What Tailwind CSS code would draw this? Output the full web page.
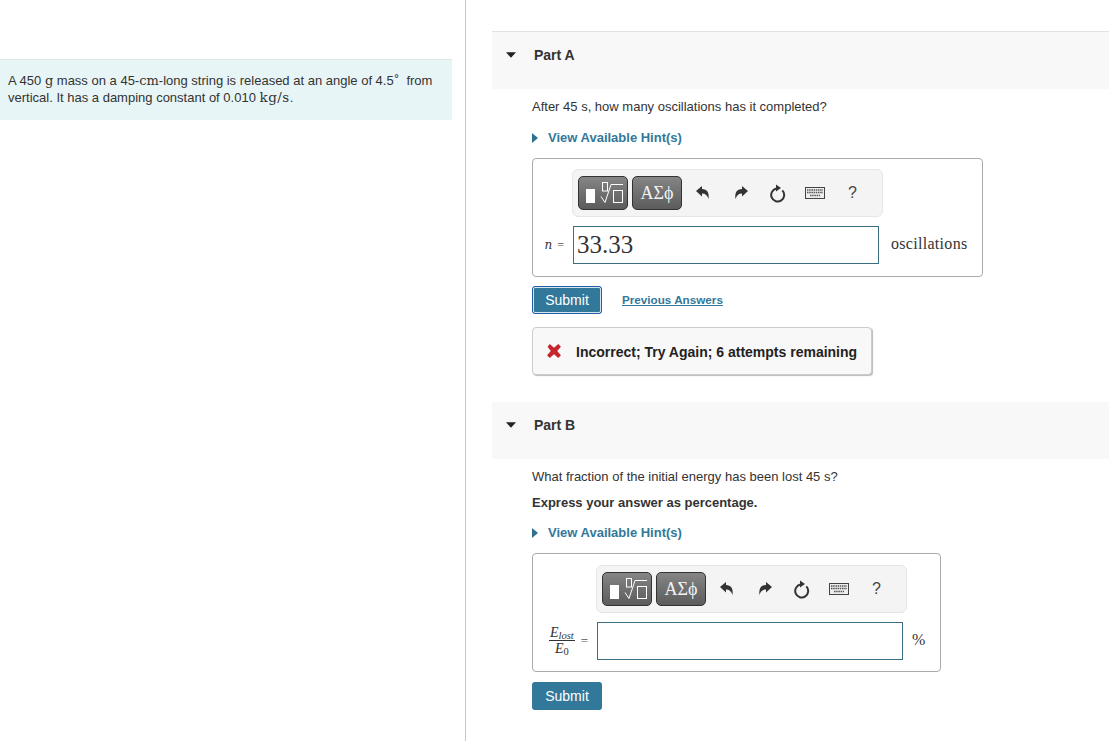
<!DOCTYPE html>
<html lang="en">
<head>
    <meta charset="UTF-8">
    <meta name="viewport" content="width=device-width, initial-scale=1.0">
    <title>Part A and Part B</title>
    <script src="https://cdn.jsdelivr.net/npm/@tailwindcss/browser@4"></script>
</head>
<body class="bg-white h-[741px] overflow-hidden font-['Liberation_Sans',Arial,sans-serif] text-[13px] text-[#333]">
<div class="flex h-[741px]">
    <!-- problem statement -->
    <div class="w-[466px] shrink-0 border-r border-[#c8c8c8] pt-[59px]">
        <div class="w-[452px] h-[61px] bg-[#e8f5f6] border-t border-[#dfe6e6] pl-2 pt-[12px] leading-[17px]">
            <div class="h-[17px] leading-[17px]">A 450 <span class="font-['DejaVu_Serif',serif] text-[13px] leading-none">g</span> mass on a 45-<span class="font-['DejaVu_Serif',serif] text-[13px] leading-none">cm</span>-long string is released at an angle of 4.5<span class="font-['DejaVu_Serif',serif] text-[11px] leading-none align-[2px]">°</span>&nbsp; from</div>
            <div class="h-[17px] leading-[17px]">vertical. It has a damping constant of 0.010 <span class="font-['DejaVu_Serif',serif] text-[13.500px] leading-none tracking-[0.5px]">kg/s</span>.</div>
        </div>
    </div>

    <!-- parts -->
    <div class="flex-1 pl-[26px] pt-[31px]">
        <div class="h-[58px] bg-[#f8f8f8] border-t border-[#e2e2e2] flex items-start pt-[15px] pl-[14px]">
            <svg class="w-[10px] h-[6px] mt-[5px]" viewBox="0 0 11 6"><path d="M0 0H11L5.500 6Z" fill="#222"/></svg>
            <span class="ml-[18px] text-[14px] leading-[16px] font-bold text-[#333]">Part A</span>
        </div>
        <div class="pl-[40px]">
            <p class="mt-[9px] leading-[17px]">After 45 s, how many oscillations has it completed?</p>
            <div class="mt-[14px] h-[17px] flex items-center font-bold text-[#32789a]">
                <svg class="w-[6px] h-[10px]" viewBox="0 0 6 10"><path d="M0 0L6 5L0 10Z" fill="#31708f"/></svg>
                <span class="ml-[10px]">View Available Hint(s)</span>
            </div>
            <!-- answer box A -->
            <div class="mt-[12px] w-[451px] h-[119px] border border-[#aaa] rounded-[4px]">
                <div class="ml-[39px] mt-[10px] w-[311px] h-[48px] bg-[#f4f4f4] border border-[#e6e6e6] rounded-[6px] flex items-center pl-[5px]">
                    <div class="w-[50px] h-[34px] rounded-[5px] border border-[#333] bg-gradient-to-b from-[#858585] to-[#5c5c5c] flex items-end pl-[7px] pb-[6px] gap-[5px]">
                        <div class="w-[9px] h-[14px] bg-white"></div>
                        <svg class="w-[24px] h-[21px]" viewBox="0 0 24 21" fill="none" stroke="#fff" stroke-width="1"><rect x="2.500" y="0.500" width="5" height="8.500"/><path d="M1 14.500L5 20.500L11 2.500H23"/><rect x="13.500" y="8.500" width="9" height="12"/></svg>
                    </div>
                    <div class="ml-[4px] w-[50px] h-[34px] rounded-[5px] border border-[#333] bg-gradient-to-b from-[#858585] to-[#5c5c5c] flex items-center justify-center text-[#f2f2f2] font-['Liberation_Serif',serif] text-[18px]">ΑΣϕ</div>
                    <svg class="ml-[13px] w-[16px] h-[16px]" viewBox="0 0 16 16"><path d="M1 6L7 1V4C12 4 14.500 7.500 13.500 14C12.500 10.500 10.500 8.500 7 8.500V11.500Z" fill="#333"/></svg>
                    <svg class="ml-[22px] w-[16px] h-[16px]" viewBox="0 0 16 16"><path d="M15 6L9 1V4C4 4 1.500 7.500 2.500 14C3.500 10.500 5.500 8.500 9 8.500V11.500Z" fill="#333"/></svg>
                    <svg class="ml-[20px] w-[18px] h-[19px]" viewBox="0 0 18 19" fill="none"><path d="M13.300 6.400A6.500 6.500 0 1 1 7.500 4.600" stroke="#333" stroke-width="2"/><path d="M7 0.500L12 4L7 7.500Z" fill="#333"/></svg>
                    <svg class="ml-[18px] w-[20px] h-[12px]" viewBox="0 0 20 12"><rect x="0.500" y="0.500" width="19" height="11" fill="#eee" stroke="#444"/><path d="M2 3H18M2 5.500H18M5 8.500H15" stroke="#555" stroke-width="1.500" stroke-dasharray="1.500 0.700"/></svg>
                    <span class="ml-[23px] text-[16px] text-[#444]">?</span>
                </div>
                <div class="flex items-center mt-[9px] h-[38px]">
                    <span class="w-[40px] text-right pr-[9px] font-['Liberation_Serif',serif] text-[12px] text-[#555]"><i class="font-['DejaVu_Serif',serif] text-[#333]">n</i><span class="ml-[5px]">=</span></span>
                    <div class="w-[306px] h-[38px] border border-[#3b6e80] flex items-center pl-[3px] font-['Liberation_Serif',serif] text-[25px] text-[#333]">33.33</div>
                    <span class="ml-[12px] mb-[2px] font-['Liberation_Serif',serif] text-[16px] tracking-[0.3px]">oscillations</span>
                </div>
            </div>
            <div class="mt-[9px] flex items-center h-[28px]">
                <button class="w-[70px] h-[28px] rounded-[3px] bg-[#32789a] text-white text-[14px] border border-[#1f5fa8] outline outline-1 -outline-offset-2 outline-white/80">Submit</button>
                <a class="ml-[20px] text-[11.700px] font-bold text-[#32789a] underline">Previous Answers</a>
            </div>
            <div class="mt-[13px] w-[340px] h-[48px] bg-[#f8f8f8] border border-[#ccc] rounded-[4px] shadow-[1px_1px_1px_#bbb] flex items-center pl-[13px]">
                <svg class="w-[16px] h-[16px]" viewBox="0 0 15 15"><path d="M1.500 3.500L3.500 1L7.500 4.500L11.500 1L14 3.500L10.500 7.500L14 11.500L11.500 14L7.500 10.500L3.500 14L1 11.500L4.500 7.500Z" fill="#c5262c"/></svg>
                <span class="ml-[14px] pt-[2px] text-[14px] font-bold text-[#222]">Incorrect; Try Again; 6 attempts remaining</span>
            </div>
        </div>

        <div class="mt-[27px] h-[57px] bg-[#f8f8f8] flex items-start pt-[15px] pl-[14px]">
            <svg class="w-[10px] h-[6px] mt-[5px]" viewBox="0 0 11 6"><path d="M0 0H11L5.500 6Z" fill="#222"/></svg>
            <span class="ml-[18px] text-[14px] leading-[16px] font-bold text-[#333]">Part B</span>
        </div>
        <div class="pl-[40px]">
            <p class="mt-[9px] leading-[17px]">What fraction of the initial energy has been lost 45 s?</p>
            <p class="mt-[9px] leading-[17px] font-bold">Express your answer as percentage.</p>
            <div class="mt-[13px] h-[17px] flex items-center font-bold text-[#32789a]">
                <svg class="w-[6px] h-[10px]" viewBox="0 0 6 10"><path d="M0 0L6 5L0 10Z" fill="#31708f"/></svg>
                <span class="ml-[10px]">View Available Hint(s)</span>
            </div>
            <!-- answer box B -->
            <div class="mt-[12px] w-[409px] h-[119px] border border-[#aaa] rounded-[4px]">
                <div class="ml-[63px] mt-[11px] w-[311px] h-[48px] bg-[#f4f4f4] border border-[#e6e6e6] rounded-[6px] flex items-center pl-[5px]">
                    <div class="w-[50px] h-[34px] rounded-[5px] border border-[#333] bg-gradient-to-b from-[#858585] to-[#5c5c5c] flex items-end pl-[7px] pb-[6px] gap-[5px]">
                        <div class="w-[9px] h-[14px] bg-white"></div>
                        <svg class="w-[24px] h-[21px]" viewBox="0 0 24 21" fill="none" stroke="#fff" stroke-width="1"><rect x="2.500" y="0.500" width="5" height="8.500"/><path d="M1 14.500L5 20.500L11 2.500H23"/><rect x="13.500" y="8.500" width="9" height="12"/></svg>
                    </div>
                    <div class="ml-[4px] w-[50px] h-[34px] rounded-[5px] border border-[#333] bg-gradient-to-b from-[#858585] to-[#5c5c5c] flex items-center justify-center text-[#f2f2f2] font-['Liberation_Serif',serif] text-[18px]">ΑΣϕ</div>
                    <svg class="ml-[13px] w-[16px] h-[16px]" viewBox="0 0 16 16"><path d="M1 6L7 1V4C12 4 14.500 7.500 13.500 14C12.500 10.500 10.500 8.500 7 8.500V11.500Z" fill="#333"/></svg>
                    <svg class="ml-[22px] w-[16px] h-[16px]" viewBox="0 0 16 16"><path d="M15 6L9 1V4C4 4 1.500 7.500 2.500 14C3.500 10.500 5.500 8.500 9 8.500V11.500Z" fill="#333"/></svg>
                    <svg class="ml-[20px] w-[18px] h-[19px]" viewBox="0 0 18 19" fill="none"><path d="M13.300 6.400A6.500 6.500 0 1 1 7.500 4.600" stroke="#333" stroke-width="2"/><path d="M7 0.500L12 4L7 7.500Z" fill="#333"/></svg>
                    <svg class="ml-[18px] w-[20px] h-[12px]" viewBox="0 0 20 12"><rect x="0.500" y="0.500" width="19" height="11" fill="#eee" stroke="#444"/><path d="M2 3H18M2 5.500H18M5 8.500H15" stroke="#555" stroke-width="1.500" stroke-dasharray="1.500 0.700"/></svg>
                    <span class="ml-[23px] text-[16px] text-[#444]">?</span>
                </div>
                <div class="flex items-center mt-[9px] h-[38px]">
                    <div class="w-[64px] flex items-center justify-end pr-[9px] font-['Liberation_Serif',serif] text-[#333]">
                        <div class="flex flex-col items-center text-[14px] leading-[15px] italic">
                            <span class="border-b border-[#333] px-[1px] h-[16px]">E<span class="text-[10.500px] align-[-2px] leading-none">lost</span></span>
                            <span class="h-[17px]">E<span class="text-[10.500px] not-italic align-[-2px] leading-none">0</span></span>
                        </div>
                        <span class="ml-[6px] text-[13px] text-[#555]">=</span>
                    </div>
                    <div class="w-[306px] h-[38px] border border-[#3b6e80]"></div>
                    <span class="ml-[9px] mb-[2px] font-['Liberation_Serif',serif] text-[16px]">%</span>
                </div>
            </div>
            <button class="mt-[10px] w-[70px] h-[28px] rounded-[3px] bg-[#32789a] text-white text-[14px]">Submit</button>
        </div>
    </div>
</div>
</body>
</html>
